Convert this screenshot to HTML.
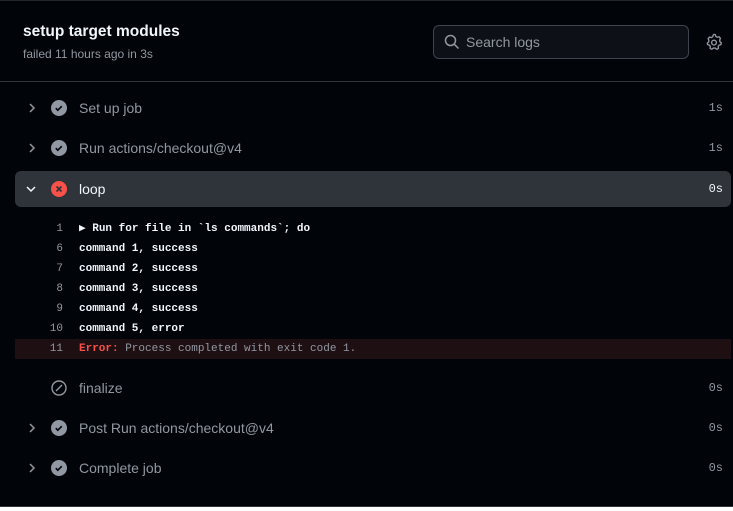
<!DOCTYPE html>
<html><head><style>
*{margin:0;padding:0;box-sizing:border-box}
html,body{width:733px;height:511px;background:#fff;overflow:hidden}
#w{position:absolute;left:0;top:0;width:733px;height:507px;background:#010409;border-top:1px solid #21262d;border-bottom:1px solid #30363d;font-family:"Liberation Sans",sans-serif}
.t{position:absolute;left:23px;top:22px;color:#f0f6fc;font-size:15.5px;font-weight:bold}
.s{position:absolute;left:23px;top:46px;color:#9198a1;font-size:12px}
.srch{position:absolute;left:433px;top:24px;width:256px;height:34px;border:1px solid #3d444d;border-radius:6px;background:#0d1117;color:#9198a1;font-size:14px;line-height:32px;padding-left:32px}
.hr{position:absolute;left:0;top:80px;width:733px;height:1px;background:#30363d}
.row{position:absolute;left:15px;width:716px;height:36px;color:#9198a1;font-size:14px;line-height:36px}
.row .n{position:absolute;left:64px}
.row .d{position:absolute;right:8px;font-family:"Liberation Mono",monospace;font-size:12px;color:#9198a1}
.row svg{position:absolute}
.sel{background:#2f343b;border-radius:6px;color:#f0f6fc}
.sel .d{color:#f0f6fc}
.log{position:absolute;left:15px;width:716px;height:20px;font-family:"Liberation Mono",monospace;font-size:11px;line-height:20px;color:#f0f6fc;font-weight:bold}
.log .ln{position:absolute;left:0;width:48px;text-align:right;color:#9198a1;font-weight:normal}
.log .tx{position:absolute;left:64px;white-space:pre}
</style></head><body><div id="w">
<div class="t">setup target modules</div>
<div class="s">failed 11 hours ago in 3s</div>
<div class="srch"><svg style="position:absolute;left:10px;top:8px" width="16" height="16" viewBox="0 0 16 16"><circle cx="6.5" cy="6.5" r="5" fill="none" stroke="#9198a1" stroke-width="1.5"/><path d="M10.2 10.2L14.5 14.5" stroke="#9198a1" stroke-width="1.5"/></svg>Search logs</div>
<svg style="position:absolute;left:705px;top:32px" width="18" height="18" viewBox="0 0 16 16"><path d="M8 1.2l1.2.3.4 1.6 1.3.7 1.6-.5 1.2 1.4-.6 1.5.1 1.5 1.3 1-.4 1.7-1.6.4-.8 1.3.3 1.6-1.6.8-1.2-1.1H7.3l-1.2 1.1-1.6-.8.3-1.6-.8-1.3-1.6-.4L2 9l1.3-1 .1-1.5-.6-1.5L4 3.6l1.6.5 1.3-.7.4-1.6z" fill="none" stroke="#9198a1" stroke-width="1.2" stroke-linejoin="round"/><circle cx="8" cy="8.5" r="2.1" fill="none" stroke="#9198a1" stroke-width="1.2"/></svg>
<div class="hr"></div>

<div class="row" style="top:89px"><svg style="left:12px;top:13px" width="10" height="10" viewBox="0 0 10 10"><path d="M3 1l4 4-4 4" fill="none" stroke="#9198a1" stroke-width="1.5"/></svg><svg style="left:36px;top:10px" width="16" height="16" viewBox="0 0 16 16"><circle cx="8" cy="8" r="8" fill="#9198a1"/><path d="M4.8 8.2l2 2 4-4" fill="none" stroke="#010409" stroke-width="1.6"/></svg><span class="n">Set up job</span><span class="d">1s</span></div>
<div class="row" style="top:129px"><svg style="left:12px;top:13px" width="10" height="10" viewBox="0 0 10 10"><path d="M3 1l4 4-4 4" fill="none" stroke="#9198a1" stroke-width="1.5"/></svg><svg style="left:36px;top:10px" width="16" height="16" viewBox="0 0 16 16"><circle cx="8" cy="8" r="8" fill="#9198a1"/><path d="M4.8 8.2l2 2 4-4" fill="none" stroke="#010409" stroke-width="1.6"/></svg><span class="n">Run actions/checkout@v4</span><span class="d">1s</span></div>
<div class="row sel" style="top:170px"><svg style="left:11px;top:13px" width="10" height="10" viewBox="0 0 10 10"><path d="M1 3l4 4 4-4" fill="none" stroke="#f0f6fc" stroke-width="1.5"/></svg><svg style="left:36px;top:10px" width="16" height="16" viewBox="0 0 16 16"><circle cx="8" cy="8" r="8" fill="#f85149"/><path d="M5.5 5.5l5 5M10.5 5.5l-5 5" stroke="#2f343b" stroke-width="1.6"/></svg><span class="n">loop</span><span class="d">0s</span></div>

<div class="log" style="top:218px"><span class="ln">1</span><span class="tx">▶ Run for file in `ls commands`; do</span></div>
<div class="log" style="top:238px"><span class="ln">6</span><span class="tx">command 1, success</span></div>
<div class="log" style="top:258px"><span class="ln">7</span><span class="tx">command 2, success</span></div>
<div class="log" style="top:278px"><span class="ln">8</span><span class="tx">command 3, success</span></div>
<div class="log" style="top:298px"><span class="ln">9</span><span class="tx">command 4, success</span></div>
<div class="log" style="top:318px"><span class="ln">10</span><span class="tx">command 5, error</span></div>
<div class="log" style="top:338px;background:#1e0f12"><span class="ln">11</span><span class="tx" style="font-weight:normal;color:#9198a1"><b style="color:#f85149">Error:</b> Process completed with exit code 1.</span></div>

<div class="row" style="top:369px"><svg style="left:36px;top:10px" width="16" height="16" viewBox="0 0 16 16"><circle cx="8" cy="8" r="7" fill="none" stroke="#9198a1" stroke-width="1.4"/><path d="M5 11l6-6" stroke="#9198a1" stroke-width="1.4"/></svg><span class="n">finalize</span><span class="d">0s</span></div>
<div class="row" style="top:409px"><svg style="left:12px;top:13px" width="10" height="10" viewBox="0 0 10 10"><path d="M3 1l4 4-4 4" fill="none" stroke="#9198a1" stroke-width="1.5"/></svg><svg style="left:36px;top:10px" width="16" height="16" viewBox="0 0 16 16"><circle cx="8" cy="8" r="8" fill="#9198a1"/><path d="M4.8 8.2l2 2 4-4" fill="none" stroke="#010409" stroke-width="1.6"/></svg><span class="n">Post Run actions/checkout@v4</span><span class="d">0s</span></div>
<div class="row" style="top:449px"><svg style="left:12px;top:13px" width="10" height="10" viewBox="0 0 10 10"><path d="M3 1l4 4-4 4" fill="none" stroke="#9198a1" stroke-width="1.5"/></svg><svg style="left:36px;top:10px" width="16" height="16" viewBox="0 0 16 16"><circle cx="8" cy="8" r="8" fill="#9198a1"/><path d="M4.8 8.2l2 2 4-4" fill="none" stroke="#010409" stroke-width="1.6"/></svg><span class="n">Complete job</span><span class="d">0s</span></div>
</div></body></html>
